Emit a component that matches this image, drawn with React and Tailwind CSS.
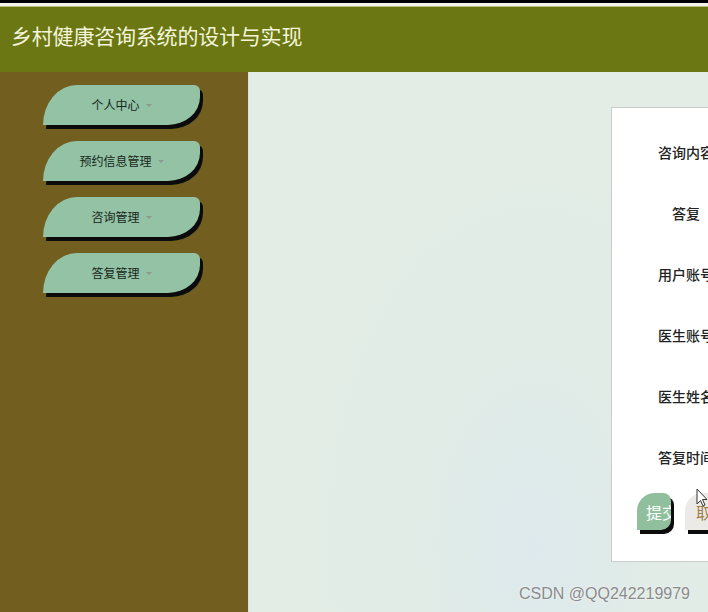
const MENU = ["个人中心", "预约信息管理", "咨询管理", "答复管理"];
const FIELDS = ["咨询内容", "答复", "用户账号", "医生账号", "医生姓名", "答复时间"];

function MenuButton({ label }) {
  return (
    <button className="flex h-[40px] w-[157px] items-center justify-center gap-[6px] rounded-tl-[34px_40px] rounded-tr-[6px] rounded-br-[32px_28px] bg-[#93c2a5] text-[12px] text-[#16261a] shadow-[3px_4px_0_#0b0b0b]">
      <span>{label}</span>
      <span className="mt-[1px] h-0 w-0 border-x-[3px] border-t-[3px] border-x-transparent border-t-[#8a9a90]" />
    </button>
  );
}

export default function App() {
  return (
    <div className="relative flex h-[612px] w-full flex-col overflow-hidden font-['Microsoft_YaHei','Noto_Sans_CJK_SC',sans-serif]">
      <div className="h-[3px] bg-black" />
      <div className="h-[3px] bg-[#f4f4ea]" />
      <div className="h-[1px] bg-[#b9c27a]" />
      <header className="flex h-[65px] items-center bg-[#6b7712] pb-[7px] pl-[11px]">
        <h1 className="text-[21px] tracking-[-0.2px] text-[#f3f4da]">乡村健康咨询系统的设计与实现</h1>
      </header>

      <div className="flex min-w-0 flex-1">
        <aside className="flex w-[248px] shrink-0 flex-col gap-[16px] bg-[#725f20] pl-[43px] pt-[13px]">
          {MENU.map((m) => (
            <MenuButton key={m} label={m} />
          ))}
        </aside>

        <main className="min-w-0 flex-1 overflow-hidden border-l border-[#d7e3dc] bg-[radial-gradient(ellipse_at_62%_88%,#dde9ec_0%,#e1ece7_30%,#e3ede6_60%)] pl-[362px] pt-[35px]">
          <div className="h-[455px] w-[420px] border border-[#c9cdca] bg-white pt-[14px]">
            {FIELDS.map((f) => (
              <div key={f} className="flex h-[61px] items-center">
                <div className="w-[148px] text-center text-[14px] font-medium text-[#222]">{f}</div>
              </div>
            ))}
            <div className="mt-[5px] flex gap-[14px] pl-[25px]">
              <button className="h-[37px] w-[34px] overflow-hidden whitespace-nowrap rounded-tl-[18px] rounded-tr-[8px] rounded-br-[10px] bg-[#8fbf9d] pl-[9px] text-left text-[16px] text-white shadow-[3px_4px_0_#0b0b0b]">
                提交
              </button>
              <button className="h-[37px] w-[34px] overflow-hidden whitespace-nowrap rounded-tl-[18px] rounded-tr-[8px] rounded-br-[10px] bg-[#ebeae6] pl-[11px] text-left text-[16px] text-[#9b7f4c] shadow-[3px_4px_0_#0b0b0b]">
                取消
              </button>
            </div>
          </div>
        </main>
      </div>

      <svg className="absolute left-[696px] top-[488px]" width="12" height="20" viewBox="0 0 12 20">
        <path d="M1 1 L1 16 L4.5 12.5 L7 18 L9 17 L6.5 11.5 L11 11.5 Z" fill="#fff" stroke="#333" strokeWidth="1" />
      </svg>

      <div className="absolute left-[519px] top-[582px] font-['Liberation_Sans',Arial,sans-serif] text-[16px] text-[#8a8a8a] [text-shadow:0_0_2px_#fff]">
        CSDN @QQ242219979
      </div>
    </div>
  );
}
